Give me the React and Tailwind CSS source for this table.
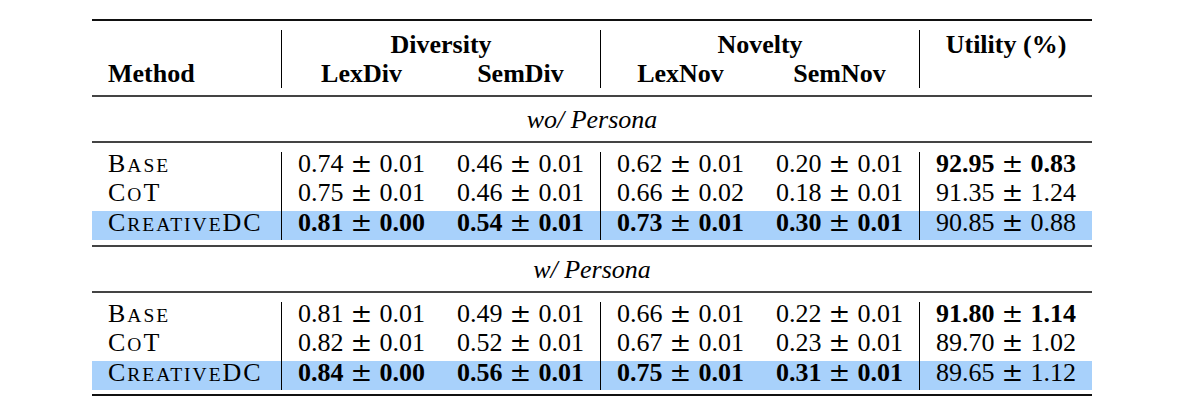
import React from 'react'

const COLS = 'grid grid-cols-[189px_160px_159px_160px_159px_173px]'

const GROUPS = [
  {
    label: 'wo/ Persona',
    rows: [
      { name: 'base', vals: ['0.74|0.01', '0.46|0.01', '0.62|0.01', '0.20|0.01', '92.95|0.83'], bold: [4] },
      { name: 'cot', vals: ['0.75|0.01', '0.46|0.01', '0.66|0.02', '0.18|0.01', '91.35|1.24'], bold: [] },
      { name: 'dc', vals: ['0.81|0.00', '0.54|0.01', '0.73|0.01', '0.30|0.01', '90.85|0.88'], bold: [0, 1, 2, 3], hl: true },
    ],
  },
  {
    label: 'w/ Persona',
    rows: [
      { name: 'base', vals: ['0.81|0.01', '0.49|0.01', '0.66|0.01', '0.22|0.01', '91.80|1.14'], bold: [4] },
      { name: 'cot', vals: ['0.82|0.01', '0.52|0.01', '0.67|0.01', '0.23|0.01', '89.70|1.02'], bold: [] },
      { name: 'dc', vals: ['0.84|0.00', '0.56|0.01', '0.75|0.01', '0.31|0.01', '89.65|1.12'], bold: [0, 1, 2, 3], hl: true },
    ],
  },
]

const ROW_H = ['h-[29px]', 'h-[30px]', 'h-[29px]']

function MethodName({ name }) {
  const sc = 'text-[19.5px]'
  if (name === 'base')
    return (
      <span className="tracking-[2px]">
        B<span className={sc}>ASE</span>
      </span>
    )
  if (name === 'cot')
    return (
      <span className="tracking-[2px]">
        C<span className={sc}>O</span>T
      </span>
    )
  return (
    <span className="tracking-[2px]">
      C<span className={sc}>REATIVE</span>DC
    </span>
  )
}

function Value({ v, bold }) {
  const [a, b] = v.split('|')
  return (
    <span className="whitespace-nowrap">
      <span className={bold ? 'font-bold' : ''}>{a}</span>
      <span className="mx-[7px] font-normal [font-family:'DejaVu_Serif',serif]">±</span>
      <span className={bold ? 'font-bold' : ''}>{b}</span>
    </span>
  )
}

function Rule({ thick }) {
  return <div className={thick ? 'h-[2px] bg-[#111]' : 'h-[2px] bg-[#444]'} />
}

export default function App() {
  return (
    <div className="w-[1195px] h-[401px] bg-white pt-[19px] pl-[92px] text-black text-[26px] [font-family:'Liberation_Serif','Times_New_Roman',serif]">
      <div className="w-[1000px]">
        <Rule thick />

        {/* header */}
        <div className={`${COLS} grid-rows-[29px_29px] pt-[9px] pb-[7px] leading-[29px] font-bold`}>
          <div className="col-start-1 row-start-2 pl-[16px]">Method</div>
          <div className="col-start-2 col-span-2 row-start-1 border-l border-black text-center">Diversity</div>
          <div className="col-start-4 col-span-2 row-start-1 border-l border-black text-center">Novelty</div>
          <div className="col-start-6 row-start-1 row-span-2 border-l border-black text-center">Utility (%)</div>
          <div className="col-start-2 row-start-2 border-l border-black text-center">LexDiv</div>
          <div className="col-start-3 row-start-2 text-center">SemDiv</div>
          <div className="col-start-4 row-start-2 border-l border-black text-center">LexNov</div>
          <div className="col-start-5 row-start-2 text-center">SemNov</div>
        </div>

        {GROUPS.map((g, gi) => (
          <div key={g.label}>
            <Rule />
            <div className="h-[44px] flex items-center justify-center italic">{g.label}</div>
            <Rule />
            <div className={gi === 0 ? 'pt-[9px] pb-[5px]' : 'pt-[9px] pb-[4px]'}>
              {g.rows.map((r, ri) => (
                <div
                  key={r.name}
                  className={`${COLS} ${ROW_H[ri]} leading-[23px] ${r.hl ? 'bg-[#a8d1fb]' : ''}`}
                >
                  <div className="h-full pl-[16px] whitespace-nowrap">
                    <MethodName name={r.name} />
                  </div>
                  {r.vals.map((v, vi) => (
                    <div
                      key={vi}
                      className={`h-full text-center ${vi === 0 || vi === 2 || vi === 4 ? 'border-l border-black' : ''}`}
                    >
                      <Value v={v} bold={r.bold.includes(vi)} />
                    </div>
                  ))}
                </div>
              ))}
            </div>
          </div>
        ))}

        <Rule thick />
      </div>
    </div>
  )
}
